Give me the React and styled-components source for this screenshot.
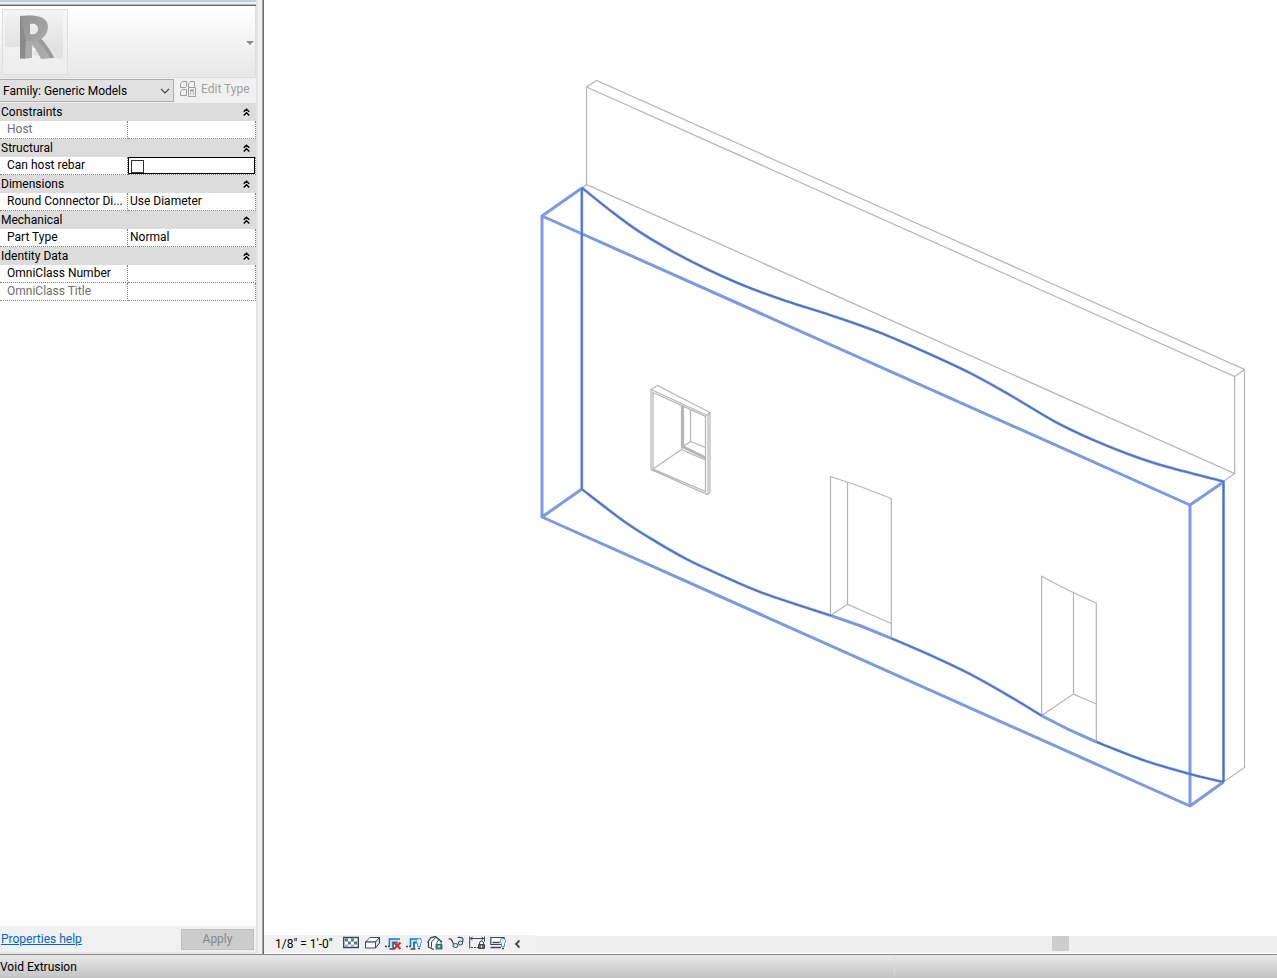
import React, { useState } from 'react'
import styled, { createGlobalStyle } from 'styled-components'

const palette = {
  chrome: '#f0f0f0',
  header: '#dcdcdc',
  dots: '#808080',
  muted: '#6d6d6d',
  disabled: '#a0a0a0',
  link: '#0066cc',
  edge: '#6a6a6a',
  selected: '#7b9ae0',
  selectedDark: '#4a70c4',
  wall: '#b4b4b4',
  ink: '#3c4654'
}

const groups = [
  { title: 'Constraints', rows: [{ id: 'host', label: 'Host', value: '', readOnly: true }] },
  { title: 'Structural', rows: [{ id: 'rebar', label: 'Can host rebar', type: 'checkbox' }] },
  {
    title: 'Dimensions',
    rows: [{ id: 'connector', label: 'Round Connector Di...', value: 'Use Diameter' }]
  },
  { title: 'Mechanical', rows: [{ id: 'part', label: 'Part Type', value: 'Normal' }] },
  {
    title: 'Identity Data',
    rows: [
      { id: 'omni-number', label: 'OmniClass Number', value: '' },
      { id: 'omni-title', label: 'OmniClass Title', value: '', readOnly: true }
    ]
  }
]

const App = () => (
  <>
    <GlobalStyle />
    <Page>
      <Workspace>
        <Properties />
        <Splitter />
        <View>
          <Canvas>
            <Model />
          </Canvas>
          <ViewBar />
        </View>
      </Workspace>
      <StatusBar>
        <StatusText>Void Extrusion</StatusText>
        <StatusRest />
      </StatusBar>
    </Page>
  </>
)

const Properties = () => (
  <Panel>
    <TitleEdge />
    <TypeSelector>
      <Thumbnail>
        <RevitLogo />
      </Thumbnail>
      <TypeButton aria-label="Change type">
        <svg width="8" height="4" viewBox="0 0 8 4">
          <path d="M0 0h8L4 4z" fill="#8a8a8a" />
        </svg>
      </TypeButton>
    </TypeSelector>

    <FilterRow>
      <SelectWrap>
        <Select aria-label="Family filter">
          <option>Family: Generic Models</option>
        </Select>
        <svg width="10" height="6" viewBox="0 0 10 6">
          <path d="M1 .8l4 4 4-4" fill="none" stroke="#444" strokeWidth="1.2" />
        </svg>
      </SelectWrap>
      <EditType disabled>
        <EditTypeIcon />
        Edit Type
      </EditType>
    </FilterRow>

    <Grid>
      <colgroup>
        <col />
        <ValueCol />
      </colgroup>
      {groups.map(group => (
        <Group key={group.title} group={group} />
      ))}
    </Grid>

    <Filler />

    <PanelFooter>
      <HelpLink href="#help">Properties help</HelpLink>
      <ApplyButton disabled>Apply</ApplyButton>
    </PanelFooter>
  </Panel>
)

const Group = ({ group }) => {
  const [open, setOpen] = useState(true)

  return (
    <tbody>
      <tr>
        <GroupCell colSpan={2}>
          <GroupButton aria-expanded={open} onClick={() => setOpen(!open)}>
            {group.title}
            <svg width="7" height="8" viewBox="0 0 7 8">
              <path d="M.7 3.8l2.8-2.6 2.8 2.6M.7 7.4l2.8-2.6 2.8 2.6" fill="none" stroke="#000" strokeWidth="1.4" />
            </svg>
          </GroupButton>
        </GroupCell>
      </tr>
      {open &&
        group.rows.map(row => (
          <tr key={row.id}>
            <LabelCell $muted={row.readOnly}>
              <label htmlFor={row.id}>{row.label}</label>
            </LabelCell>
            <ValueCell>
              {row.type === 'checkbox' ? (
                <ActiveCell>
                  <Checkbox id={row.id} type="checkbox" />
                </ActiveCell>
              ) : (
                <ValueInput id={row.id} defaultValue={row.value} readOnly={row.readOnly} />
              )}
            </ValueCell>
          </tr>
        ))}
    </tbody>
  )
}

const ViewBar = () => (
  <BottomBar>
    <Controls>
      <ScaleButton>1/8" = 1'-0"</ScaleButton>
      {viewIcons.map(({ name, icon }) => (
        <IconButton key={name} aria-label={name}>
          <svg width="16" height="16" viewBox="0 2 16 16" fill="none" stroke={palette.ink}>
            {icon}
          </svg>
        </IconButton>
      ))}
      <IconButton aria-label="Scroll left">
        <svg width="16" height="16" viewBox="1 1 16 16">
          <path d="M9.5 5.5L6 9l3.5 3.5" fill="none" stroke="#444" strokeWidth="1.8" />
        </svg>
      </IconButton>
    </Controls>
    <ScrollTrack>
      <ScrollThumb />
    </ScrollTrack>
  </BottomBar>
)

const pipe = (
  <>
    <path d="M4.5 12V5H15" stroke="#1677c8" strokeWidth="1.6" />
    <path d="M6 13V6.500h9" stroke="#b9def7" strokeWidth="1.200" />
    <path d="M8 14.500V8.500h5" stroke="#1677c8" strokeWidth="1.800" />
    <path d="M0 12.500h2M3 12.500h2M4.500 15h5" strokeWidth="1.500" />
  </>
)

const bulb = (
  <>
    <path d="M13 4.500a2.700 2.700 0 0 0-1.500 5v3h3v-3a2.700 2.700 0 0 0-1.500-5z" fill="#e4f3fd" stroke="#4f94d0" />
    <path d="M12 14.500h2" strokeWidth="1.500" />
  </>
)

const viewIcons = [
  {
    name: 'Detail level',
    icon: (
      <>
        <path d="M.7 3.500h14.600v10H.7z" fill="#fff" strokeWidth="1.400" />
        <path d="M2 4.500h3v3H2zM8 4.500h3v3H8zM5 7.500h3v3H5zM11 7.500h3v3h-3z" fill="#68717e" stroke="none" />
        <path d="M2 10.500h3V13H2zM8 10.500h3V13H8z" fill="#a4abb3" stroke="none" />
      </>
    )
  },
  {
    name: 'Visual style',
    icon: (
      <>
        <path d="M1.500 8L6 3.500h9.500L11.500 8z" fill="#fff" />
        <path d="M1.500 8h10v6h-10z" fill="#f8f8f8" />
        <path d="M11.500 8l4-4.500V9l-4 5z" fill="#e0e3e8" />
      </>
    )
  },
  {
    name: 'Crop view',
    icon: (
      <>
        {pipe}
        <path d="M9 8.500l6.500 6.500M15.500 8.500L9 15" stroke="#d42a2a" strokeWidth="2.200" />
      </>
    )
  },
  {
    name: 'Show crop region',
    icon: (
      <>
        {pipe}
        {bulb}
      </>
    )
  },
  {
    name: 'Lock 3D view',
    icon: (
      <>
        <path d="M2 8.500L7 3l6 5v6l-6 1-5-2z" fill="#fff" stroke="none" />
        <path d="M.5 8.500L4 3.500l4.500-1L15 8M1.500 8v5L7 15.500" strokeWidth="1.300" />
        <path d="M8.500 3.500L4.500 8v5.500" />
        <path d="M9 10.500h6V15H9z" fill="#3d8c78" stroke="#24705e" />
        <path d="M10 10V8.500a2 2 0 0 1 4 0V10" fill="#fff" stroke="#24705e" />
        <path d="M12 11.500v2" stroke="#fff" strokeWidth="1.400" />
      </>
    )
  },
  {
    name: 'Temporary hide',
    icon: (
      <>
        <path d="M.5 5c3-1 3.500 1.500 5 5M9.500 3.500c3-.5 5.500 0 5.500 2s-.5 2.500-1 3.500" strokeWidth="1.200" />
        <ellipse cx="7.500" cy="11.500" rx="2.600" ry="2" fill="#c9e6f3" />
        <ellipse cx="12.500" cy="9" rx="2.200" ry="2" fill="#c9e6f3" />
      </>
    )
  },
  {
    name: 'Reveal constraints',
    icon: (
      <>
        <path d="M.7 2.500v12M15.500 2.500v5M1 4.500h14M3.500 3L1.500 4.500l2 1.500M12.500 3l2 1.500-2 1.500" />
        <path d="M2 13.500h7" strokeDasharray="2 1" />
        <path d="M9.500 10.500h6v4h-6z" fill="#666" stroke="#444" />
        <path d="M10.500 10V9a2 2 0 0 1 4 0v1" stroke="#444" />
        <path d="M12.500 11.500v2" stroke="#fff" />
      </>
    )
  },
  {
    name: 'Temporary view properties',
    icon: (
      <>
        <path d="M.8 3.500h13.400v7H.8z" fill="#fff" strokeWidth="1.200" />
        <path d="M2.500 8.500h7M.5 13.500h10.500" strokeWidth="1.300" />
        {bulb}
      </>
    )
  }
]

const EditTypeIcon = () => (
  <svg width="16" height="16" viewBox="0 0 16 16" fill="none" stroke="#a0a0a0">
    <path d="M.5 6.500v-4l2-2h4v5l-1 1zM8.500 6.500v-4l2-2h4v5M6.500 8.500h-4l-2 2v4h6z" />
    <path d="M8.500 6.500h7v9h-7z" fill="#f0f0f0" />
    <path d="M10 9.500h4M10 12.500h1M13 12.500h1" strokeWidth="2" />
  </svg>
)

const RevitLogo = () => (
  <svg width="60" height="60" viewBox="0 0 60 60">
    <defs>
      <linearGradient id="face" x1="0" y1="0" x2="1" y2="1">
        <stop offset="0" stopColor="#929292" />
        <stop offset="1" stopColor="#b3b3b3" />
      </linearGradient>
      <linearGradient id="backdrop" x1="0" y1="0" x2="0" y2="1">
        <stop offset="0" stopColor="#f2f2f2" />
        <stop offset="1" stopColor="#dedede" />
      </linearGradient>
    </defs>
    <path d="M0 2h58v41l-22-8-6 1-14-1H0z" fill="url(#backdrop)" />
    <path d="M24 42l14-9 20 10v4z" fill="#e2e2e2" />
    <path
      d="M15 4c10-1 27-2 28 10 0 6-3 11-7 13 4 4 9 12 13 19l-13 1c-3-6-6-12-10-15v14l-11 1z M25 12v10c5 1 8-1 8-5s-3-6-8-5z"
      fill="url(#face)"
      fillRule="evenodd"
    />
    <path d="M15 4l6 25-1 18-5-2z" fill="#8a8a8a" />
    <path d="M21 29h8l7-2c6 5 10 13 13 19H37c-4-7-6-11-10-14v14h-7z" fill="#aaa" />
    <path d="M32 29c6 5 11 12 13 17h4c-3-7-9-15-13-19z" fill="#999" />
  </svg>
)

// Catmull-Rom through every point
const smooth = points =>
  points.reduce((path, [x, y], i) => {
    if (i === 0) return `M${x} ${y}`
    const prev = points[i - 1]
    const before = points[i - 2] || prev
    const after = points[i + 1] || [x, y]
    const c1 = [prev[0] + (x - before[0]) / 6, prev[1] + (y - before[1]) / 6]
    const c2 = [x - (after[0] - prev[0]) / 6, y - (after[1] - prev[1]) / 6]
    return `${path}C${c1} ${c2} ${x} ${y}`
  }, '')

const topCurve = smooth([
  [581.7, 187.5], [609, 209.5], [638.3, 231], [671.7, 251], [706.7, 269], [745, 286], [786, 301],
  [830, 315], [878.3, 332], [925, 352], [970, 373], [1010, 395], [1055, 421.7], [1091.7, 439.3],
  [1126.7, 453.5], [1163, 465.7], [1223.5, 481.5]
])

const floorLeft = smooth([
  [581.7, 489], [624.5, 521.7], [656, 541.7], [688.3, 560], [724.3, 576.7], [765, 593.8], [831, 615.7]
])

const floorMiddle = smooth([
  [891.3, 638.3], [930, 655], [970, 674], [1010, 696.5], [1041.7, 715.7]
])

const floorRight = smooth([[1096.5, 742], [1145, 760.7], [1190, 774], [1223.5, 782]])

// the view box starts where the view does in the window
const Model = () => (
  <svg width="100%" height="100%" viewBox="264 0 1013 935" fill="none" role="img" aria-label="3D view">
    <g stroke={palette.wall} strokeWidth="1.2">
      <path d="M586.500 87L596.500 80.500 1244.500 369.500V767.500L1223.500 782M586.500 87L1234.700 376.500 1244.500 369.500M586.500 87V184.500L1234.700 473.500V376.500M582 188l4.500-3.500M1234.700 473.500L1224 481" />
      <path d="M651 389.500L657.500 385.500 710 412.500V492.500L707.500 494.500 651 469.500zM651 389.500L707.500 415.500M653 392.500L705.500 416.500V491.500L653 469zM707.500 415.500L710 412.500M708 415.500V494" />
      <path d="M681.500 405V449.500L705.500 460M683.500 406V446L705.500 457M690.500 409V441.500L705.500 447.500M683.500 446L690.500 441.500M653 469L681.500 449.500" />
      <path d="M830.500 615.500V476.500Q861 486 891.300 498.500V638M847.500 482.500V604.300L891.300 623.500M847.500 604.300L830.500 615.500" />
      <path d="M1041.700 715.500V576.300Q1070 592 1096.300 603V742M1073.500 592.500V694L1096.300 704M1073.500 694L1041.700 715.500" />
    </g>
    <path d="M682.500 405V447L705.500 458" stroke="#b4b4b4" strokeWidth="2" />
    <g stroke={palette.selected} strokeWidth="3" strokeLinejoin="round">
      <path d="M582 188L542 216V517L582 489M542 216L1190 505 1223.500 482M542 517L1190 806V505M1190 806L1223.500 782" />
      <path d="M831 615.700L861 626 891.300 638.300M1041.700 715.700Q1068 730 1096.500 742" />
    </g>
    <g stroke={palette.selected} strokeWidth="2.8">
      <path d={`${topCurve}V782M581.8 188V489${floorLeft}${floorMiddle}${floorRight}`} />
    </g>
    <g stroke={palette.selectedDark} strokeWidth="1.4">
      <path d={`${topCurve}V782M581.8 188V489${floorLeft}${floorMiddle}${floorRight}`} />
    </g>
  </svg>
)

const GlobalStyle = createGlobalStyle`
  * {
    box-sizing: border-box;
  }

  body {
    margin: 0;
    background: ${palette.chrome};
    color: #000;
    font-family: Roboto, 'Open Sans', sans-serif;
    font-size: 12px;
    line-height: 16px;
  }

  button,
  input,
  select {
    font: inherit;
    color: inherit;
    margin: 0;
    padding: 0;
    border: 0;
    background: none;
  }

  svg {
    display: block;
    flex: none;
  }
`

const Page = styled.div`
  display: flex;
  flex-direction: column;
  height: 100vh;
  overflow: hidden;
`

const Workspace = styled.div`
  display: flex;
  flex: 1;
  min-height: 0;
`

const Panel = styled.aside`
  display: flex;
  flex-direction: column;
  width: 258px;
  flex: none;
  border-right: 2px solid #e4e4e4;
  border-bottom: 2px solid #e4e4e4;
`

const Splitter = styled.div`
  width: 6px;
  flex: none;
  border-right: 1px solid ${palette.edge};
  box-shadow: inset -1px 0 #a0a0a0;
`

const TitleEdge = styled.div`
  height: 6px;
  flex: none;
  border-top: 2px solid #c1d0dc;
  border-bottom: 1px solid ${palette.edge};
  box-shadow: inset 0 -1px #b8b8b8;
`

const TypeSelector = styled.div`
  display: flex;
  align-items: center;
  justify-content: space-between;
  height: 72px;
  flex: none;
  padding: 0 1px 0 2px;
  border-right: 1px solid #dedede;
  border-bottom: 1px solid #dedede;
  background: linear-gradient(#fff, #e8e8e8);
`

const Thumbnail = styled.div`
  display: flex;
  align-items: center;
  justify-content: center;
  width: 66px;
  height: 66px;
  border: 1px solid #dfdfdf;
  background: rgba(240, 240, 240, 0.6);
`

const TypeButton = styled.button`
  padding: 6px 0 4px;
`

const FilterRow = styled.div`
  display: flex;
  align-items: center;
  gap: 6px;
  height: 25px;
  flex: none;
`

const SelectWrap = styled.div`
  display: flex;
  align-items: center;
  width: 174px;
  height: 23px;
  padding-right: 3px;
  border: 1px solid #adadad;
  border-left: 0;
  background: #e1e1e1;
`

const Select = styled.select`
  appearance: none;
  flex: 1;
  padding-left: 3px;
`

const EditType = styled.button`
  display: flex;
  align-items: center;
  gap: 5px;
  padding-bottom: 4px;
  color: ${palette.disabled};
  white-space: nowrap;
`

const Grid = styled.table`
  width: 100%;
  flex: none;
  table-layout: fixed;
  border-collapse: separate;
  border-spacing: 0;
  background: #fff;

  td,
  th {
    height: 18px;
    padding: 0;
    text-align: left;
    font-weight: normal;
  }
`

const ValueCol = styled.col`
  width: 50%;
`

const GroupCell = styled.th`
  background: ${palette.header};
`

const GroupButton = styled.button`
  display: flex;
  align-items: center;
  justify-content: space-between;
  width: 100%;
  height: 18px;
  padding: 0 6px 0 1px;
`

const LabelCell = styled.th`
  border-right: 1px dotted ${palette.dots};
  border-bottom: 1px dotted ${palette.dots};
  color: ${({ $muted }) => ($muted ? palette.muted : '#000')};
  white-space: nowrap;

  label {
    display: block;
    padding: 0 0 1px 7px;
  }
`

const ValueCell = styled.td`
  border-right: 1px dotted ${palette.dots};
  border-bottom: 1px dotted ${palette.dots};
`

const ValueInput = styled.input`
  display: block;
  width: 100%;
  height: 17px;
  padding: 0 0 2px 2px;
  outline: none;
`

const ActiveCell = styled.div`
  display: flex;
  align-items: flex-end;
  height: 17px;
  padding-left: 2px;
  border: 1px solid #000;
`

const Checkbox = styled.input`
  appearance: none;
  width: 13px;
  height: 13px;
  border: 1px solid #333 !important;
  background: #fff;

  &:checked {
    background: #333;
  }
`

const Filler = styled.div`
  flex: 1;
  background: #fff;
`

const PanelFooter = styled.div`
  display: flex;
  align-items: center;
  justify-content: space-between;
  height: 26px;
  flex: none;
  padding: 0 2px 0 1px;
`

const HelpLink = styled.a`
  color: ${palette.link};
`

const ApplyButton = styled.button`
  width: 73px;
  height: 21px;
  border: 1px solid #bfbfbf;
  background: #ccc;
  color: #888;
`

const View = styled.main`
  display: flex;
  flex-direction: column;
  flex: 1;
  min-width: 0;
`

const Canvas = styled.div`
  flex: 1;
  min-height: 0;
  background: #fff;
`

const BottomBar = styled.div`
  display: flex;
  height: 19px;
  flex: none;
  border-bottom: 1px solid #fff;
`

const Controls = styled.div`
  display: flex;
  align-items: center;
  gap: 5px;
  width: 271px;
  padding-left: 11px;
`

const ScaleButton = styled.button`
  width: 63px;
  text-align: left;
  white-space: nowrap;
`

const IconButton = styled.button`
  height: 16px;
`

const ScrollTrack = styled.div`
  flex: 1;
  border-top: 1px solid #fff;
  background: #efefef;
  padding-left: 51%;
`

const ScrollThumb = styled.div`
  width: 17px;
  height: 15px;
  background: #cdcdcd;
`

const StatusBar = styled.footer`
  display: flex;
  align-items: center;
  height: 24px;
  flex: none;
  border-top: 1px solid #888;
  background: linear-gradient(#e8e8e8, #c4c4c4);
`

const StatusText = styled.span`
  width: 70%;
  white-space: nowrap;
`

const StatusRest = styled.span`
  flex: 1;
  height: 21px;
  border-left: 1px solid #d8d8d8;
`

export default App
